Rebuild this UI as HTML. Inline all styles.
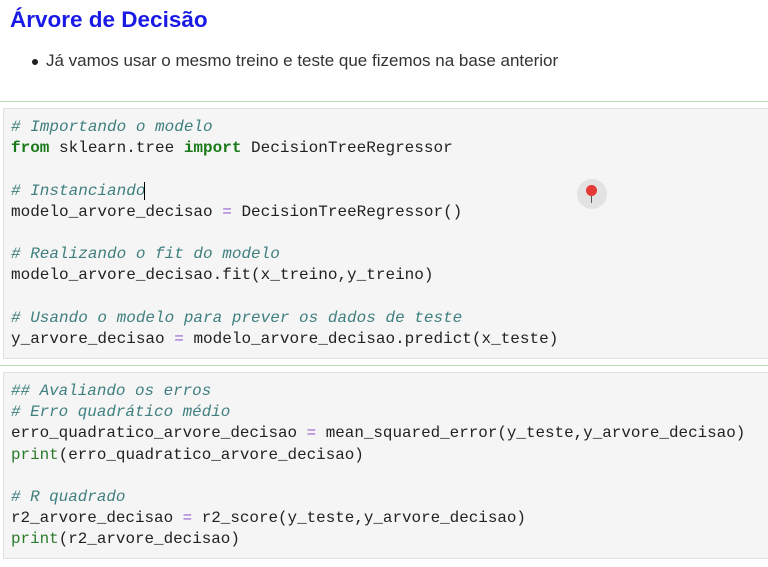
<!DOCTYPE html>
<html><head><style>
body{margin:0;width:768px;height:567px;background:#fff;position:relative;overflow:hidden;font-family:"Liberation Sans",sans-serif}
h1{position:absolute;left:10px;top:7px;margin:0;font-size:22.5px;font-weight:bold;color:#1a1ae6}
.bul{position:absolute;left:46px;top:51px;font-size:17px;color:#333}
.bul:before{content:"";position:absolute;left:-14px;top:8px;width:6px;height:6px;border-radius:50%;background:#222}
.hr{position:absolute;left:0;width:768px;height:1px;background:#b9dcb5}
.cell{position:absolute;left:3px;width:770px;background:#f5f5f5;border:1px solid #e0e0e0;box-sizing:border-box}
pre{margin:0;position:absolute;left:7px;font-family:"Liberation Mono",monospace;font-size:16px;line-height:21.2px;color:#222;white-space:pre}
.c{color:#3f7f7f;font-style:italic}
.k{color:#1a7a1a;font-weight:bold}
.b{color:#2a7a2a}
.o{color:#9a5fd0}
</style></head><body>
<h1>Árvore de Decisão</h1>
<div class="bul">Já vamos usar o mesmo treino e teste que fizemos na base anterior</div>
<div class="hr" style="top:101px"></div>
<div class="cell" style="top:108px;height:251px">
<pre style="top:8px"><span class="c"># Importando o modelo</span>
<span class="k">from</span> sklearn.tree <span class="k">import</span> DecisionTreeRegressor

<span class="c"># Instanciando</span><span style="border-left:1.5px solid #000;margin-left:-1px"></span>
modelo_arvore_decisao <span class="o">=</span> DecisionTreeRegressor()

<span class="c"># Realizando o fit do modelo</span>
modelo_arvore_decisao.fit(x_treino,y_treino)

<span class="c"># Usando o modelo para prever os dados de teste</span>
y_arvore_decisao <span class="o">=</span> modelo_arvore_decisao.predict(x_teste)</pre>
<div style="position:absolute;left:573px;top:70px;width:30px;height:30px;border-radius:50%;background:#e2e2e2"></div>
<div style="position:absolute;left:582px;top:76px;width:11px;height:11px;border-radius:50%;background:#e53935"></div>
<div style="position:absolute;left:587px;top:87px;width:1px;height:7px;background:#555"></div>
</div>
<div class="hr" style="top:365px"></div>
<div class="cell" style="top:372px;height:187px">
<pre style="top:8px;font-size:15.9px"><span class="c">## Avaliando os erros</span>
<span class="c"># Erro quadrático médio</span>
erro_quadratico_arvore_decisao <span class="o">=</span> mean_squared_error(y_teste,y_arvore_decisao)
<span class="b">print</span>(erro_quadratico_arvore_decisao)

<span class="c"># R quadrado</span>
r2_arvore_decisao <span class="o">=</span> r2_score(y_teste,y_arvore_decisao)
<span class="b">print</span>(r2_arvore_decisao)</pre>
</div>
</body></html>
